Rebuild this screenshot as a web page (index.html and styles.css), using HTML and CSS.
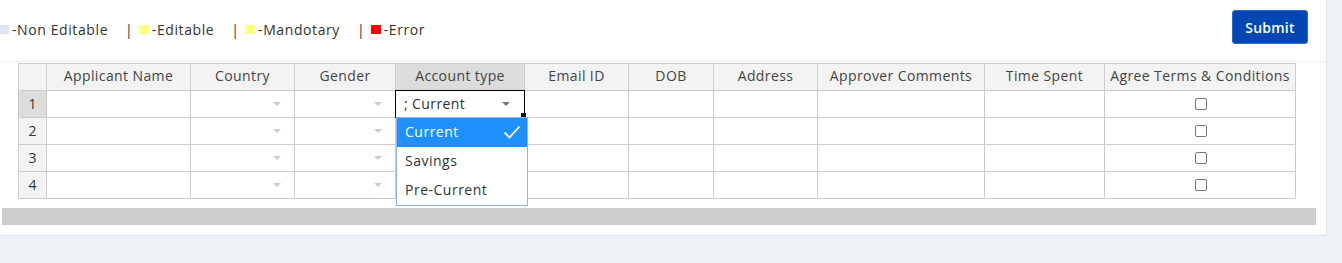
FILE: index.html
```html
<!DOCTYPE html>
<html>
<head>
<meta charset="utf-8">
<link rel="stylesheet" href="styles.css">
</head>
<body>
<div class="card">
  <div class="toolbar">
    <div class="legend">
      <span class="sw sw-non"></span><span class="lg-text">-Non Editable</span>
      <span class="sep">|</span>
      <span class="sw sw-edit"></span><span class="lg-text">-Editable</span>
      <span class="sep">|</span>
      <span class="sw sw-mand"></span><span class="lg-text">-Mandotary</span>
      <span class="sep">|</span>
      <span class="sw sw-err"></span><span class="lg-text">-Error</span>
    </div>
    <button class="submit">Submit</button>
  </div>
  <div class="grid-wrap">
    <div class="grid">
      <div class="hd rh"></div>
      <div class="hd">Applicant Name</div>
      <div class="hd">Country</div>
      <div class="hd">Gender</div>
      <div class="hd hd-sel">Account type</div>
      <div class="hd">Email ID</div>
      <div class="hd">DOB</div>
      <div class="hd">Address</div>
      <div class="hd">Approver Comments</div>
      <div class="hd">Time Spent</div>
      <div class="hd">Agree Terms &amp; Conditions</div>

      <div class="rh rh-sel">1</div>
      <div class="c"></div>
      <div class="c dd"><span class="arrow"></span></div>
      <div class="c dd"><span class="arrow"></span></div>
      <div class="c acct">
        <div class="editor"><span class="ed-text">; Current</span><span class="ed-arrow"></span></div>
        <span class="handle"></span>
        <div class="menu">
          <div class="opt opt-sel"><span>Current</span>
            <svg class="check" width="18" height="14" viewBox="0 0 18 14"><path d="M1.5 7.5 L6.5 12.5 L16.5 1.5" fill="none" stroke="#fff" stroke-width="1.8"/></svg>
          </div>
          <div class="opt">Savings</div>
          <div class="opt">Pre-Current</div>
        </div>
      </div>
      <div class="c"></div>
      <div class="c"></div>
      <div class="c"></div>
      <div class="c"></div>
      <div class="c"></div>
      <div class="c cb"><span class="box"></span></div>

      <div class="rh">2</div>
      <div class="c"></div>
      <div class="c dd"><span class="arrow"></span></div>
      <div class="c dd"><span class="arrow"></span></div>
      <div class="c"></div>
      <div class="c"></div>
      <div class="c"></div>
      <div class="c"></div>
      <div class="c"></div>
      <div class="c"></div>
      <div class="c cb"><span class="box"></span></div>

      <div class="rh">3</div>
      <div class="c"></div>
      <div class="c dd"><span class="arrow"></span></div>
      <div class="c dd"><span class="arrow"></span></div>
      <div class="c"></div>
      <div class="c"></div>
      <div class="c"></div>
      <div class="c"></div>
      <div class="c"></div>
      <div class="c"></div>
      <div class="c cb"><span class="box"></span></div>

      <div class="rh">4</div>
      <div class="c"></div>
      <div class="c dd"><span class="arrow"></span></div>
      <div class="c dd"><span class="arrow"></span></div>
      <div class="c"></div>
      <div class="c"></div>
      <div class="c"></div>
      <div class="c"></div>
      <div class="c"></div>
      <div class="c"></div>
      <div class="c cb"><span class="box"></span></div>
    </div>
    <div class="hscroll"></div>
  </div>
</div>
</body>
</html>
```

FILE: styles.css
```css
* { box-sizing: border-box; }
html, body { margin: 0; padding: 0; }
body {
  background: #eef1f6;
  font-family: "Open Sans", "Noto Sans", sans-serif;
  color: #333;
  width: 1342px;
  height: 263px;
  overflow: hidden;
}
.card {
  width: 1327px;
  height: 236px;
  background: #fff;
  border-right: 1px solid #e2e4e8;
  border-bottom: 1px solid #dcdfe4;
}
.toolbar {
  height: 61px;
  display: flex;
  justify-content: space-between;
  align-items: flex-start;
  padding: 10px 18px 0 0;
}
.legend {
  display: flex;
  align-items: center;
  margin-left: -1px;
  margin-top: 10px;
  font-size: 14px;
  letter-spacing: 0.6px;
  height: 18px;
  color: #333;
}
.sw {
  display: inline-block;
  width: 10px;
  height: 9px;
  margin-right: 3px;
}
.sw-non { background: #dae5f8; }
.sw-edit { background: #ffff80; }
.sw-mand { background: #ffff80; }
.sw-err { background: #ff0000; }
.sep {
  margin: 0 6px 0 17px;
  color: #333;
  letter-spacing: 0;
}
.submit {
  width: 76px;
  height: 34px;
  background: #0047b3;
  border: 1px solid #2a6ad8;
  border-radius: 3px;
  color: #fff;
  font-family: inherit;
  font-size: 14px;
  font-weight: 600;
  letter-spacing: 0.2px;
  padding: 0;
}
.grid-wrap {
  border-top: 1px solid #eeeeee;
  padding-top: 1px;
}
.grid {
  margin-left: 18px;
  width: 1278px;
  display: grid;
  grid-template-columns: 28px 144px 104px 101px 129px 104px 85px 104px 167px 120px 191px;
  grid-auto-rows: 27px;
  border-left: 1px solid #cccccc;
  border-top: 1px solid #cccccc;
}
.grid > div {
  border-right: 1px solid #cccccc;
  border-bottom: 1px solid #cccccc;
  position: relative;
}
.hd {
  background: #f3f3f3;
  font-size: 14px;
  letter-spacing: 0.4px;
  color: #444;
  display: flex;
  align-items: center;
  justify-content: center;
  white-space: nowrap;
  padding-bottom: 3px;
}
.hd-sel { background: #dcdcdc; }
.rh {
  background: #f3f3f3;
  font-size: 14px;
  color: #333;
  display: flex;
  align-items: center;
  justify-content: center;
  padding-bottom: 1px;
}
.rh-sel { background: #dcdcdc; }
.c { background: #fff; }
.dd .arrow {
  position: absolute;
  right: 13px;
  top: 11px;
  width: 0;
  height: 0;
  border-left: 4px solid transparent;
  border-right: 4px solid transparent;
  border-top: 4px solid #cccccc;
}
.cb {
  display: flex;
  align-items: center;
  justify-content: center;
}
.box {
  width: 12px;
  height: 12px;
  border: 1px solid #767676;
  border-radius: 2px;
  margin-left: 1px;
  background: #fff;
}
.acct { z-index: 5; }
.editor {
  position: absolute;
  left: -1px;
  top: -1px;
  width: 130px;
  height: 28px;
  border: 1px solid #000;
  background: #fff;
  display: flex;
  align-items: center;
  padding-left: 8px;
  padding-bottom: 1px;
  font-size: 14px;
  letter-spacing: 0.4px;
  color: #333;
}
.ed-arrow {
  position: absolute;
  left: 106px;
  top: 11px;
  width: 0;
  height: 0;
  border-left: 4px solid transparent;
  border-right: 4px solid transparent;
  border-top: 4px solid #777;
}
.handle {
  position: absolute;
  left: 125px;
  top: 22px;
  width: 5px;
  height: 4px;
  background: #000;
  z-index: 3;
}
.menu {
  position: absolute;
  left: 0;
  top: 26px;
  width: 132px;
  height: 89px;
  border: 1px solid #8fb4ea;
  background: #fff;
  z-index: 2;
}
.opt {
  height: 29px;
  display: flex;
  align-items: center;
  justify-content: space-between;
  padding: 0 8px 2px 8px;
  font-size: 14px;
  letter-spacing: 0.5px;
  color: #333;
}
.opt-sel {
  background: #1e90ff;
  color: #fff;
  font-weight: 500;
  height: 29px;
}
.check { margin-right: -2px; }
.hscroll {
  margin: 9px 0 0 2px;
  width: 1314px;
  height: 17px;
  background: #cecece;
}
```
